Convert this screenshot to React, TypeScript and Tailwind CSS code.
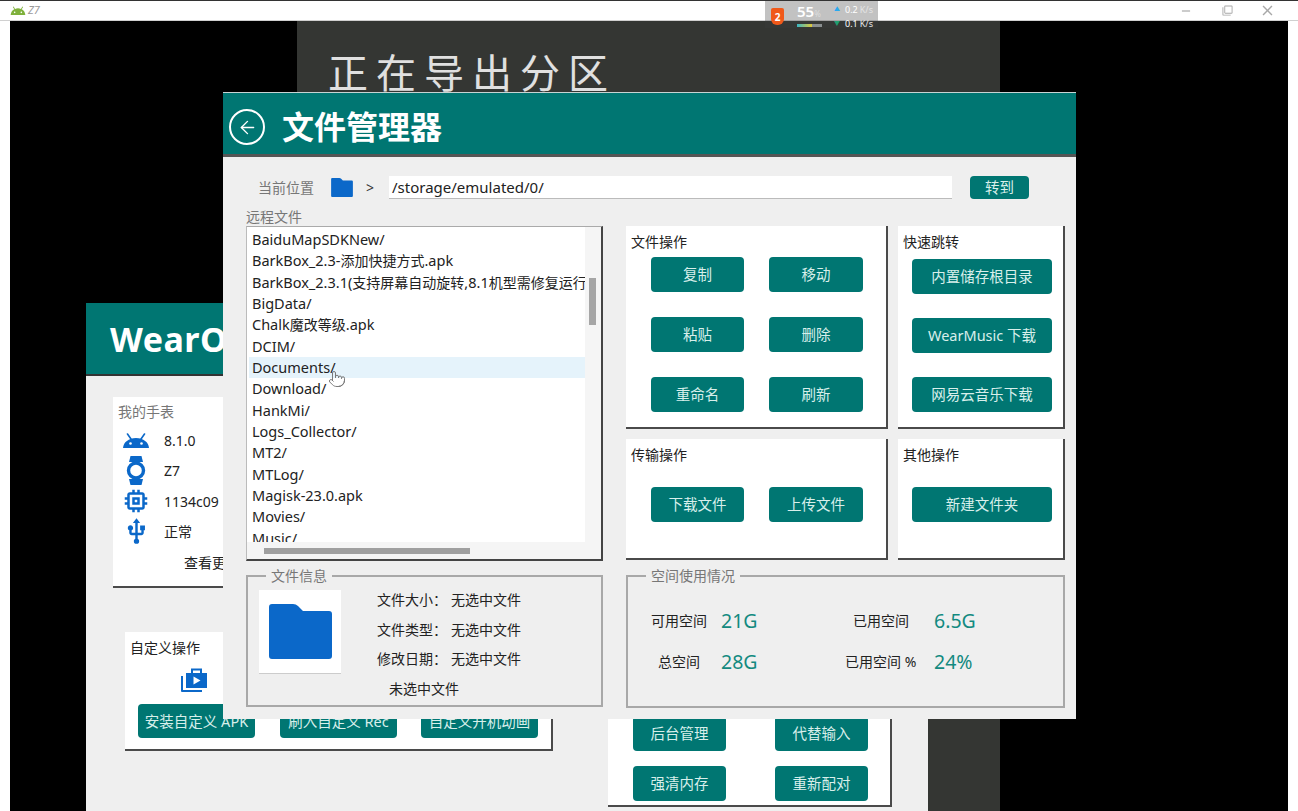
import React from "react";
import { MdMemory, MdUsb, MdAndroid, MdRemove, MdClose, MdFilterNone } from "react-icons/md";
import { ArrowLeft, Pointer } from "lucide-react";

const FONT = "font-['Noto_Sans','Noto_Sans_CJK_SC',sans-serif]";

function Btn({ children, className = "" }: { children: React.ReactNode; className?: string }) {
  return (
    <button className={`flex items-center justify-center rounded-[4px] bg-[#007672] text-[14.5px] leading-none text-[#d8efeb] ${className}`}>
      {children}
    </button>
  );
}

function Card({ title, className = "", children }: { title?: string; className?: string; children?: React.ReactNode }) {
  return (
    <div className={`border-r-2 border-b-2 border-[#4a4a4a] bg-white ${className}`}>
      {title && <div className="pl-[5px] pt-[6px] text-[14px] leading-[20px] text-[#222]">{title}</div>}
      {children}
    </div>
  );
}

function Group({ title, className = "", children }: { title: string; className?: string; children: React.ReactNode }) {
  return (
    <fieldset className={`border-2 border-[#a8a8a8] ${className}`}>
      <legend className="ml-[18px] px-[5px] text-[14px] leading-[20px] text-[#777]">{title}</legend>
      {children}
    </fieldset>
  );
}

function FolderShape({ className = "" }: { className?: string }) {
  return (
    <svg viewBox="0 0 63 55" className={className} fill="#0b68c9">
      <path d="M3 0h21q3 0 5 2l5 5h26q3 0 3 3v42q0 3-3 3H3q-3 0-3-3V3q0-3 3-3z" />
    </svg>
  );
}

const Z = ({ children }: { children: React.ReactNode }) => <span className="text-[14px]">{children}</span>;

const files: { k: string; v: React.ReactNode }[] = [
  { k: "a", v: "BaiduMapSDKNew/" },
  { k: "b", v: <>BarkBox_2.3-<Z>添加快捷方式</Z>.apk</> },
  { k: "c", v: <>BarkBox_2.3.1(<Z>支持屏幕自动旋转</Z>,8.1<Z>机型需修复运行</Z></> },
  { k: "d", v: "BigData/" },
  { k: "e", v: <>Chalk<Z>魔改等级</Z>.apk</> },
  { k: "f", v: "DCIM/" },
  { k: "g", v: "Documents/" },
  { k: "h", v: "Download/" },
  { k: "i", v: "HankMi/" },
  { k: "j", v: "Logs_Collector/" },
  { k: "l", v: "MT2/" },
  { k: "m", v: "MTLog/" },
  { k: "n", v: "Magisk-23.0.apk" },
  { k: "o", v: "Movies/" },
  { k: "p", v: "Music/" },
];

function AndroidHead() {
  return (
    <svg viewBox="0 0 26 15" className="h-[15px] w-[26px]" fill="#0b68c9">
      <path d="M0 15c.4-5.600 5.600-10 13-10s12.600 4.400 13 10z" />
      <path d="M4.500 1l3.500 5M21.500 1L18 6" stroke="#0b68c9" strokeWidth="1.600" strokeLinecap="round" />
      <circle cx="7.500" cy="10.500" r="1.300" fill="#fff" />
      <circle cx="18.500" cy="10.500" r="1.300" fill="#fff" />
    </svg>
  );
}

function WatchIcon() {
  return (
    <svg viewBox="0 0 20 29" className="h-[29px] w-[20px]" fill="#0b68c9">
      <path d="M4.500 0h11l1.500 6H3zM3 23h14l-1.500 6h-11z" />
      <circle cx="10" cy="14.500" r="7.500" fill="#fff" stroke="#0b68c9" strokeWidth="3.400" />
    </svg>
  );
}

function BagPlayIcon() {
  return (
    <svg viewBox="0 0 26 26" className="h-[26px] w-[26px]">
      <path d="M1 9v15h20" fill="none" stroke="#0b68c9" strokeWidth="2" strokeLinejoin="round" />
      <path d="M5 6h21v15H5z" fill="#0b68c9" />
      <path d="M11 6V2.500h9V6" fill="none" stroke="#0b68c9" strokeWidth="2" />
      <path d="M12.500 9.500l7 4-7 4z" fill="#fff" />
    </svg>
  );
}

function TitleBar() {
  return (
    <div className="flex h-[21px] shrink-0 items-center border-t border-b border-t-[#333] border-b-[#d0d0d0] bg-white pl-[10px]">
      <MdAndroid className="h-[16px] w-[16px] text-[#7fb13c]" />
      <span className="ml-[2px] text-[11px] italic text-[#999]">Z7</span>
      <div className="ml-auto flex items-center text-[#a8a8a8]">
        <MdRemove className="h-[14px] w-[14px]" />
        <MdFilterNone className="ml-[29px] h-[11px] w-[11px]" />
        <MdClose className="ml-[26px] mr-[22px] h-[17px] w-[17px]" />
      </div>
    </div>
  );
}

function NetWidget() {
  return (
    <div className="absolute left-[765px] top-[1px] flex h-[27px] w-[113px] items-start bg-[#3c3c3c50] text-white">
      <div className="ml-[6px] mt-[7px] flex h-[17px] w-[13px] items-center justify-center rounded-b-[6px] rounded-t-[2px] bg-[#f0591a] text-[10px] font-bold leading-none">2</div>
      <div className="ml-[13px] flex w-[32px] flex-col">
        <div className="text-[15px] font-semibold leading-[20px]">55<span className="text-[8px] font-normal text-[#ddd]">%</span></div>
        <div className="h-[3px] w-[25px] bg-[linear-gradient(90deg,#3ab6c4_0,#e0c93a_60%,#8a8f90_62%)]" />
      </div>
      <div className="ml-[5px] mt-[2px] flex flex-col gap-[1px] text-[9px] leading-[13px]">
        <div className="flex items-center"><span className="mr-[5px] text-[6px] text-[#29a9ef]">▲</span><span>0.2</span><span className="ml-[2px] text-[#e4e4e4]">K/s</span></div>
        <div className="flex items-center"><span className="mr-[5px] text-[6px] text-[#1f9e70]">▼</span><span>0.1</span><span className="ml-[2px] text-[#e4e4e4]">K/s</span></div>
      </div>
    </div>
  );
}

function BaseWindow() {
  return (
    <div className="absolute bottom-0 left-[76px] top-[282px] flex w-[842px] flex-col bg-[#efefef]">
      <div className="flex h-[73px] shrink-0 items-center border-b-2 border-[#333] bg-[#007672] pl-[24px] text-[34px] font-bold leading-none tracking-[0.500px] text-white">
        WearOS
      </div>
      <div className="flex flex-1">
        <div className="w-[522px]">
          <Card className="ml-[27px] mt-[21px] h-[191px] w-[200px] !border-r-0">
            <div className="pl-[5px] pt-[5px] text-[14px] leading-[20px] text-[#777]">我的手表</div>
            <div className="mt-[3px] flex flex-col text-[14px] text-[#222]">
              {[
                [<AndroidHead key="a" />, "8.1.0"],
                [<WatchIcon key="w" />, "Z7"],
                [<MdMemory key="c" className="h-[30px] w-[30px] text-[#0b68c9]" />, "1134c09"],
                [<MdUsb key="u" className="h-[29px] w-[29px] text-[#0b68c9]" />, "正常"],
              ].map(([icon, text], i) => (
                <div key={i} className="flex h-[30.500px] items-center">
                  <div className="flex w-[46px] justify-center">{icon}</div>
                  <span className="ml-[5px]">{text}</span>
                </div>
              ))}
            </div>
            <div className="mt-[6px] pl-[71px] text-[14px] leading-[20px] text-[#222]">查看更多</div>
          </Card>
          <Card title="自定义操作" className="ml-[39px] mt-[44px] flex h-[119px] w-[428px] flex-col">
            <div className="mt-[9px] flex pl-[56px]"><BagPlayIcon /></div>
            <div className="mt-[11px] flex pl-[13px]">
              <Btn className="h-[34px] w-[117px]">安装自定义 APK</Btn>
              <Btn className="ml-[25px] h-[34px] w-[117px]">刷入自定义 Rec</Btn>
              <Btn className="ml-[24px] h-[34px] w-[117px]">自定义开机动画</Btn>
            </div>
          </Card>
        </div>
        <Card className="mb-[4px] mt-[200px] flex w-[284px] flex-col justify-end pb-[4px] pl-[25px]">
          <div className="grid grid-cols-[93px_93px] gap-x-[49px] gap-y-[15px]">
            {["后台管理", "代替输入", "强清内存", "重新配对"].map((t) => (
              <Btn key={t} className="h-[35px]">{t}</Btn>
            ))}
          </div>
        </Card>
      </div>
    </div>
  );
}

function FileWindow() {
  return (
    <div className="absolute left-[213px] top-[71px] flex h-[627px] w-[853px] flex-col border-t border-[#c8d4d4] bg-[#efefef]">
      <div className="flex h-[64px] shrink-0 items-center border-b-[3px] border-b-[#555] bg-[#007672] pl-[6px] pt-[7px] text-white">
        <div className="flex h-[36px] w-[36px] items-center justify-center rounded-full border-2 border-white">
          <ArrowLeft className="h-[21px] w-[21px]" strokeWidth={1.6} />
        </div>
        <span className="ml-[17px] text-[32px] font-bold leading-none">文件管理器</span>
      </div>
      <div className="mt-[19px] flex h-[23px] items-center pl-[35px] text-[14px]">
        <span className="text-[#777]">当前位置</span>
        <FolderShape className="ml-[16px] h-[19px] w-[24px]" />
        <span className="ml-[12px] text-[#333]">&gt;</span>
        <div className="ml-[15px] flex h-[23px] w-[563px] items-center border-b border-[#bbb] bg-white pl-[3px] text-[15px] text-[#222]">/storage/emulated/0/</div>
        <Btn className="ml-[18px] h-[23px] w-[59px]">转到</Btn>
      </div>
      <div className="mt-[9px] flex pl-[23px]">
        <div className="flex w-[357px] flex-col">
          <div className="text-[14px] leading-[18px] text-[#777]">远程文件</div>
          <div className="relative h-[335px] overflow-hidden border-t border-l border-r-2 border-b-2 border-t-[#aaa] border-l-[#bbb] border-r-[#444] border-b-[#444] bg-white">
            <div className="flex h-[316px] flex-col overflow-hidden pl-[2px] pr-[16px] pt-[2px] text-[14.500px] text-[#222]">
              {files.map((f) => (
                <div key={f.k} className={`h-[21.350px] shrink-0 whitespace-nowrap pl-[3px] leading-[21px] ${f.k === "g" ? "bg-[#e5f3fb]" : ""}`}>{f.v}</div>
              ))}
            </div>
            <div className="absolute bottom-0 right-0 top-0 w-[16px] bg-[#f5f5f5]" />
            <div className="absolute right-[5px] top-[51px] h-[47px] w-[7px] bg-[#a6a6a6]" />
            <div className="absolute bottom-0 left-0 right-0 h-[17px] bg-[#f5f5f5]" />
            <div className="absolute bottom-[5px] left-[17px] h-[6px] w-[206px] bg-[#a0a0a0]" />
            <Pointer className="absolute left-[81px] top-[143px] h-[18px] w-[18px] text-[#777]" strokeWidth={1.300} />
          </div>
          <Group title="文件信息" className="mt-[5px] h-[141px]">
            <div className="flex">
              <div className="ml-[11px] mt-[4px] flex h-[84px] w-[82px] items-center justify-center border-b border-[#ccc] bg-white">
                <FolderShape className="h-[55px] w-[63px]" />
              </div>
              <div className="ml-[36px] -mt-[1px] flex flex-col text-[14px] leading-[29.700px] text-[#222]">
                <div className="flex"><span className="w-[74px]">文件大小：</span><span>无选中文件</span></div>
                <div className="flex"><span className="w-[74px]">文件类型：</span><span>无选中文件</span></div>
                <div className="flex"><span className="w-[74px]">修改日期：</span><span>无选中文件</span></div>
                <div className="pl-[12px]">未选中文件</div>
              </div>
            </div>
          </Group>
        </div>
        <div className="ml-[23px] flex w-[439px] flex-col">
          <div className="mt-[18px] grid grid-cols-[262px_167px] grid-rows-[203px_121px] gap-x-[10px] gap-y-[10px]">
            <Card title="文件操作">
              <div className="mt-[5px] grid grid-cols-[93px_94px] gap-x-[25px] gap-y-[25px] pl-[25px]">
                {["复制", "移动", "粘贴", "删除", "重命名", "刷新"].map((t) => (
                  <Btn key={t} className="h-[35px]">{t}</Btn>
                ))}
              </div>
            </Card>
            <Card title="快速跳转">
              <div className="ml-[14px] mt-[7px] flex w-[140px] flex-col gap-[24px]">
                {["内置储存根目录", "WearMusic 下载", "网易云音乐下载"].map((t) => (
                  <Btn key={t} className="h-[35px]">{t}</Btn>
                ))}
              </div>
            </Card>
            <Card title="传输操作">
              <div className="mt-[22px] flex gap-[25px] pl-[25px]">
                <Btn className="h-[35px] w-[93px]">下载文件</Btn>
                <Btn className="h-[35px] w-[94px]">上传文件</Btn>
              </div>
            </Card>
            <Card title="其他操作">
              <div className="ml-[14px] mt-[22px]">
                <Btn className="h-[35px] w-[140px]">新建文件夹</Btn>
              </div>
            </Card>
          </div>
          <Group title="空间使用情况" className="mt-[6px] h-[142px]">
            <div className="mt-[20px] grid grid-cols-[72px_132px_60px_1fr] items-center gap-y-[11px] pl-[2px] text-[14px] leading-[30px] text-[#222]">
              <span className="whitespace-nowrap pl-[21px]">可用空间</span>
              <span className="pl-[19px] text-[19.500px] text-[#138a80]">21G</span>
              <span className="whitespace-nowrap pl-[19px]">已用空间</span>
              <span className="pl-[40px] text-[19.500px] text-[#138a80]">6.5G</span>
              <span className="whitespace-nowrap pl-[28px]">总空间</span>
              <span className="pl-[19px] text-[19.500px] text-[#138a80]">28G</span>
              <span className="whitespace-nowrap pl-[11px]">已用空间 %</span>
              <span className="pl-[40px] text-[19.500px] text-[#138a80]">24%</span>
            </div>
          </Group>
        </div>
      </div>
    </div>
  );
}

export default function App() {
  return (
    <div className={`relative flex h-[811px] w-[1298px] flex-col overflow-hidden bg-white ${FONT}`}>
      <TitleBar />
      <div className="relative mx-[10px] flex-1 overflow-hidden bg-black">
        <div className="absolute bottom-0 left-[287px] top-0 w-[703px] overflow-hidden bg-[#343633]">
          <div className="ml-[31px] mt-[26px] whitespace-nowrap text-[40px] font-normal leading-[52px] tracking-[8px] text-[#e0e0e0]">正在导出分区</div>
        </div>
        <BaseWindow />
        <FileWindow />
      </div>
      <NetWidget />
    </div>
  );
}
